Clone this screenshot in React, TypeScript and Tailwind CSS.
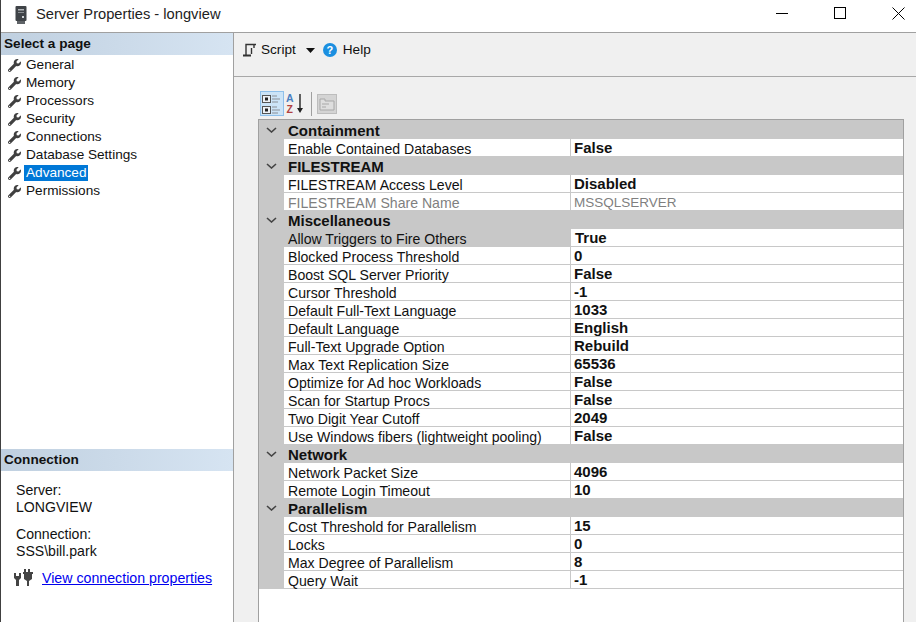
import React from "react";
import { FaWrench } from "react-icons/fa";

const pages = ["General", "Memory", "Processors", "Security", "Connections", "Database Settings", "Advanced", "Permissions"];

type Row = { name: string; value: string; muted?: boolean; selected?: boolean };
const groups: { title: string; rows: Row[] }[] = [
  { title: "Containment", rows: [{ name: "Enable Contained Databases", value: "False" }] },
  {
    title: "FILESTREAM",
    rows: [
      { name: "FILESTREAM Access Level", value: "Disabled" },
      { name: "FILESTREAM Share Name", value: "MSSQLSERVER", muted: true },
    ],
  },
  {
    title: "Miscellaneous",
    rows: [
      { name: "Allow Triggers to Fire Others", value: "True", selected: true },
      { name: "Blocked Process Threshold", value: "0" },
      { name: "Boost SQL Server Priority", value: "False" },
      { name: "Cursor Threshold", value: "-1" },
      { name: "Default Full-Text Language", value: "1033" },
      { name: "Default Language", value: "English" },
      { name: "Full-Text Upgrade Option", value: "Rebuild" },
      { name: "Max Text Replication Size", value: "65536" },
      { name: "Optimize for Ad hoc Workloads", value: "False" },
      { name: "Scan for Startup Procs", value: "False" },
      { name: "Two Digit Year Cutoff", value: "2049" },
      { name: "Use Windows fibers (lightweight pooling)", value: "False" },
    ],
  },
  {
    title: "Network",
    rows: [
      { name: "Network Packet Size", value: "4096" },
      { name: "Remote Login Timeout", value: "10" },
    ],
  },
  {
    title: "Parallelism",
    rows: [
      { name: "Cost Threshold for Parallelism", value: "15" },
      { name: "Locks", value: "0" },
      { name: "Max Degree of Parallelism", value: "8" },
      { name: "Query Wait", value: "-1" },
    ],
  },
];

const ServerIcon = () => (
  <svg width="12" height="18" viewBox="0 0 12 18">
    <rect x="0.5" y="0" width="11" height="15" rx="1" fill="#3f4347" />
    <rect x="3" y="3" width="6" height="1.500" fill="#b0b4b8" />
    <rect x="3" y="6" width="6" height="1" fill="#8a8e92" />
    <rect x="7" y="10" width="2" height="2" fill="#cfd3d6" />
    <rect x="2" y="15" width="8" height="3" fill="#5f6367" />
  </svg>
);

const ScriptIcon = () => (
  <svg width="15" height="14" viewBox="0 0 15 14" fill="none" stroke="#333" strokeWidth="1.4">
    <path d="M4 12V1.500h10" />
    <path d="M12 1.500V5" />
    <path d="M1 12.500h8" strokeWidth="2" />
    <path d="M9.500 11V5" />
  </svg>
);

const CategoryIcon = () => (
  <svg width="22" height="22" viewBox="0 0 22 22">
    <rect x="1.500" y="2.500" width="8" height="7" fill="#eef2f6" stroke="#555" />
    <rect x="4" y="4.500" width="3" height="3" fill="#222" />
    <rect x="1.500" y="13.500" width="8" height="7" fill="#eef2f6" stroke="#555" />
    <rect x="4" y="15.500" width="3" height="3" fill="#222" />
    <path d="M11 3h5M11 6h8M11 9h6M11 14h5M11 17h8M11 20h6" stroke="#8a8f96" strokeWidth="1" />
  </svg>
);

const PropPagesIcon = () => (
  <svg width="20" height="20" viewBox="0 0 20 20">
    <rect x="0.500" y="0.500" width="19" height="19" fill="#d4d4d4" stroke="#bdbdbd" />
    <path d="M3 5h5v2h9v9H3z" fill="#dedede" stroke="#a8a8a8" />
    <path d="M5 10h7M5 13h4" stroke="#a8a8a8" />
  </svg>
);

const PlugIcon = () => (
  <svg width="19" height="18" viewBox="0 0 19 18" fill="#444">
    <path d="M0 4h2v3h3V4h2v5l-2 2v6H2v-6L0 9z" />
    <path d="M10 0h2v3h2V0h2v3h3v2h-1v5l-3 2v5h-2v-5l-3-2V5H9V3h1z" />
  </svg>
);

export default function App() {
  return (
    <div className="flex h-[622px] w-[916px] flex-col overflow-hidden border-l border-[#404040] bg-white font-['Liberation_Sans',sans-serif] text-[14.1px] text-[#111]">
      {/* title bar */}
      <div className="flex h-[33px] shrink-0 items-center border-b border-[#a0a0a0]">
        <div className="ml-[14px] mt-[-3px]">
          <ServerIcon />
        </div>
        <span className="ml-[9px] mt-[-4px] text-[14.7px] text-[#222]">Server Properties - longview</span>
        <div className="ml-auto mt-[-6px] flex items-center">
          <div className="h-[1px] w-[12px] bg-black" />
          <div className="ml-[46px] h-[12px] w-[12px] border border-black" />
          <svg className="ml-[46px] mr-[11px]" width="13" height="13" viewBox="0 0 13 13" stroke="#000" fill="none">
            <path d="M0.500 0.500l12 12M12.500 0.500l-12 12" />
          </svg>
        </div>
      </div>

      <div className="flex min-h-0 flex-1">
        {/* left pane */}
        <div className="flex w-[233px] shrink-0 flex-col border-r border-[#a0a0a0]">
          <div className="flex h-[22px] items-center bg-gradient-to-r from-[#c0d0e0] to-[#d6e4f2] pl-[3px] text-[13.6px] font-bold">
            Select a page
          </div>
          <div className="flex flex-1 flex-col pt-[1px] text-[13.6px]">
            {pages.map((p) => (
              <div key={p} className="flex h-[18px] items-center pl-[7px]">
                <FaWrench className="h-[13px] w-[13px] shrink-0 text-[#404040]" />
                <span className={"ml-[3px] px-[2px] leading-[16px] " + (p === "Advanced" ? "bg-[#0078d7] text-white" : "")}>{p}</span>
              </div>
            ))}
          </div>
          <div className="flex h-[22px] items-center bg-gradient-to-r from-[#c0d0e0] to-[#d6e4f2] pl-[3px] text-[13.6px] font-bold">
            Connection
          </div>
          <div className="flex h-[151px] shrink-0 flex-col pl-[15px] pt-[11px] leading-[17px]">
            <div>Server:</div>
            <div>LONGVIEW</div>
            <div className="mt-[10px]">Connection:</div>
            <div>SSS\bill.park</div>
            <div className="mt-[9px] flex items-center">
              <div className="ml-[-2px]">
                <PlugIcon />
              </div>
              <span className="ml-[9px] text-[14.2px] text-[#0000ee] underline">View connection properties</span>
            </div>
          </div>
        </div>

        {/* right pane */}
        <div className="flex min-w-0 flex-1 flex-col bg-[#f0f0f0]">
          <div className="flex h-[44px] shrink-0 items-center border-b border-[#a8a8a8] pb-[9px] pl-[8px] text-[13.6px]">
            <ScriptIcon />
            <span className="ml-[4px]">Script</span>
            <svg className="ml-[10px]" width="9" height="5" viewBox="0 0 9 5">
              <path d="M0 0h9L4.500 5z" fill="#111" />
            </svg>
            <span className="ml-[8px] flex h-[14px] w-[14px] items-center justify-center rounded-full bg-[#1b8fe0] text-[11px] font-bold text-white">?</span>
            <span className="ml-[6px]">Help</span>
          </div>

          <div className="flex items-center pl-[26px] pt-[14px] pb-[3px]">
            <div className="flex h-[25px] w-[24px] items-center justify-center border border-[#8fc0ea] bg-[#cce4f7]">
              <CategoryIcon />
            </div>
            <div className="ml-[2px] flex h-[25px] w-[24px] items-center">
              <span className="flex flex-col text-center text-[10.500px] leading-[11px] font-bold">
                <span className="text-[#4a7fc0]">A</span>
                <span className="text-[#b04040]">Z</span>
              </span>
              <svg className="ml-[3px]" width="6" height="20" viewBox="0 0 6 20">
                <path d="M3 0v16" stroke="#222" strokeWidth="1.4" />
                <path d="M0 14h6l-3 5z" fill="#222" />
              </svg>
            </div>
            <div className="ml-[1px] h-[24px] w-[1px] bg-[#a0a0a0]" />
            <div className="ml-[5px]">
              <PropPagesIcon />
            </div>
          </div>

          {/* property grid */}
          <div className="ml-[24px] mr-[12px] flex-1 border-x border-t border-[#a0a0a0] bg-white">
            <div className="h-[1px] bg-[#c8c8c8]" />
            {groups.map((g) => (
              <div key={g.title}>
                <div className="flex h-[18px] items-center bg-[#c8c8c8] pt-[3px]">
                  <svg className="ml-[7px] mb-[3px]" width="11" height="6" viewBox="0 0 11 6" fill="none" stroke="#444" strokeWidth="1.6">
                    <path d="M1 1l4.500 4 4.500-4" />
                  </svg>
                  <span className="ml-[11px] text-[15px] font-bold">{g.title}</span>
                </div>
                {g.rows.map((r) => (
                  <div key={r.name} className="flex h-[18px] bg-[#c8c8c8]">
                    <div className="w-[25px] shrink-0" />
                    <div
                      className={
                        "flex w-[287px] shrink-0 items-center border-r border-b border-[#c8c8c8] pt-[5px] pl-[4px] " +
                        (r.selected ? "bg-[#c8c8c8]" : "bg-white") +
                        (r.muted ? " text-[#7f7f7f]" : "")
                      }
                    >
                      {r.name}
                    </div>
                    <div
                      className={
                        "flex flex-1 items-center border-b border-[#c8c8c8] bg-white " +
                        (r.selected ? "pl-[4px] " : "pl-[3px] ") +
                        (r.muted ? "pt-[4px] text-[13.5px] text-[#7f7f7f]" : "pt-[2px] text-[15px] font-bold")
                      }
                    >
                      {r.value}
                    </div>
                  </div>
                ))}
              </div>
            ))}
          </div>
        </div>
      </div>
    </div>
  );
}
